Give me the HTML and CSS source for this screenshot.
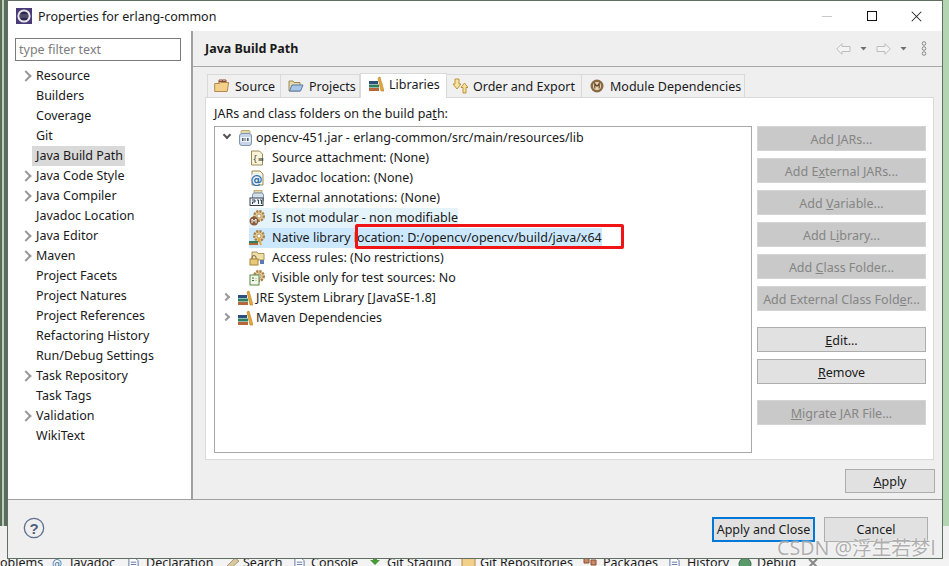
FILE: index.html
```html
<!DOCTYPE html>
<html lang="en">
<head>
<meta charset="utf-8">
<title>Properties for erlang-common</title>
<link rel="stylesheet" href="styles.css">
</head>
<body>
<svg class="defs" width="0" height="0" aria-hidden="true">
  <symbol id="books" viewBox="0 0 16 16">
    <rect x="1" y="12" width="10" height="3" fill="#b5673a"/><rect x="1" y="8.500" width="10" height="3" fill="#2f7f5f"/><rect x="1" y="5" width="9" height="3" fill="#2b4f7f"/>
    <path d="M10 2l2-1 4 14h-3z" fill="#e5a93a" stroke="#b57d22" stroke-width=".6"/>
  </symbol>
  <symbol id="gear" viewBox="0 0 16 16">
    <circle cx="10" cy="6" r="4.800" fill="#e8d09a" stroke="#a9814a" stroke-width="2.400" stroke-dasharray="2.200 1"/>
    <circle cx="10" cy="6" r="2" fill="#fff" stroke="#a9814a" stroke-width=".8"/>
  </symbol>
  <symbol id="jar" viewBox="0 0 16 16">
    <rect x="4" y="0.500" width="9" height="3" rx="1" fill="#e5d8a8" stroke="#a89a6a" stroke-width=".8"/>
    <rect x="2.500" y="3.500" width="12" height="12" rx="2.500" fill="#c7d5e8" stroke="#7f94ad"/>
    <rect x="3.500" y="7" width="10" height="5" fill="#eef2f7"/>
    <path d="M5 8h1.500v3H5zM7.600 8h.9v3h-.9zM10 8h1.600v3H10z" fill="#4a5a70"/>
  </symbol>
  <symbol id="pagei" viewBox="0 0 12 14">
    <path d="M1 .5h7l3 3v10H1z" fill="#fff" stroke="#5a6f9a"/><path d="M3 5h6M3 7.500h6M3 10h6" stroke="#5a6f9a"/>
  </symbol>
</svg>

<div class="desktop">
  <div class="dialog">
    <header class="titlebar">
      <svg class="appicon" width="16" height="16" viewBox="0 0 16 16">
        <rect width="16" height="16" fill="#4b3a78"/>
        <circle cx="8" cy="8" r="6.600" fill="#e9e7ee"/>
        <circle cx="8" cy="8" r="4.600" fill="#2b2747"/>
        <path d="M3.600 7h8.800M3.600 9h8.800" stroke="#8f88ad" stroke-width=".7"/>
      </svg>
      <span class="title">Properties for erlang-common</span>
      <div class="winctl">
        <span class="winbtn"><i class="min"></i></span>
        <span class="winbtn"><i class="max"></i></span>
        <span class="winbtn">
          <svg width="11" height="11" viewBox="0 0 12 12"><path d="M.8.8l10.400 10.400M11.200.8L.8 11.200" stroke="#222" stroke-width="1.100"/></svg>
        </span>
      </div>
    </header>

    <div class="main">
      <aside class="sidebar">
        <div class="filter">type filter text</div>
        <ul class="nav">
          <li class="exp">Resource</li>
          <li>Builders</li>
          <li>Coverage</li>
          <li>Git</li>
          <li class="current"><span>Java Build Path</span></li>
          <li class="exp">Java Code Style</li>
          <li class="exp">Java Compiler</li>
          <li>Javadoc Location</li>
          <li class="exp">Java Editor</li>
          <li class="exp">Maven</li>
          <li>Project Facets</li>
          <li>Project Natures</li>
          <li>Project References</li>
          <li>Refactoring History</li>
          <li>Run/Debug Settings</li>
          <li class="exp">Task Repository</li>
          <li>Task Tags</li>
          <li class="exp">Validation</li>
          <li>WikiText</li>
        </ul>
      </aside>

      <section class="content">
        <div class="pagehead">
          <h1>Java Build Path</h1>
          <div class="navarrows">
            <svg width="15" height="12" viewBox="0 0 15 12"><path d="M6 .7L.7 6 6 11.300V8.500h8V3.500H6z" fill="#f4f4f4" stroke="#bdbdbd"/></svg>
            <i class="drop"></i>
            <svg width="15" height="12" viewBox="0 0 15 12"><path d="M9 .7L14.300 6 9 11.300V8.500H1V3.500h8z" fill="#f4f4f4" stroke="#bdbdbd"/></svg>
            <i class="drop"></i>
            <svg class="dots" width="6" height="15" viewBox="0 0 6 15"><circle cx="3" cy="2.500" r="1.800" fill="none" stroke="#8a8a8a"/><circle cx="3" cy="7.500" r="1.800" fill="none" stroke="#8a8a8a"/><circle cx="3" cy="12.500" r="1.800" fill="none" stroke="#8a8a8a"/></svg>
          </div>
        </div>

        <div class="tabs">
          <div class="tab t1">
            <svg width="16" height="16" viewBox="0 0 16 16"><path d="M5 5V2h7v3M8.500 2v3M5 3.500h7" fill="none" stroke="#8a4a30"/><path d="M.7 5.500h5l1-1h8l-1.500 9H.7z" fill="#f3d08a" stroke="#b58a4a"/></svg>
            Source
          </div>
          <div class="tab t2">
            <svg width="16" height="16" viewBox="0 0 16 16"><path d="M1 3h4l1 1.500h6V13H1z" fill="#e8d9a8" stroke="#9a8a5a"/><path d="M1.500 13l2.500-6h11l-2.500 6z" fill="#a9c6e8" stroke="#5a7aa8"/></svg>
            Projects
          </div>
          <div class="tab t3 active">
            <svg width="16" height="16"><use href="#books"/></svg>
            Libraries
          </div>
          <div class="tab t4">
            <svg width="16" height="16" viewBox="0 0 16 16"><path d="M3 1h4v5h2L5 11 1 6h2z" fill="#f7e3a0" stroke="#b58a30" stroke-width=".9"/><path d="M11 15V9.500H9l3.500-4.500L16 9.500h-2V15z" fill="#f7e3a0" stroke="#b58a30" stroke-width=".9"/></svg>
            Order and Export
          </div>
          <div class="tab t5">
            <svg width="16" height="16" viewBox="0 0 16 16"><circle cx="8" cy="8" r="6.500" fill="#8a6a44"/><circle cx="8" cy="8" r="4" fill="#e8d8b8"/><path d="M5.800 10.500v-5l2.200 2.800 2.200-2.800v5" fill="none" stroke="#6a4a2a" stroke-width="1.200"/></svg>
            Module Dependencies
          </div>
        </div>

        <div class="tabpanel">
          <div class="panellabel">JARs and class folders on the build pa<u>t</u>h:</div>
          <div class="panelbody">
            <div class="tree">
              <div class="row"><b class="tw open"></b><svg class="ic" width="16" height="16"><use href="#jar"/></svg><span>opencv-451.jar - erlang-common/src/main/resources/lib</span></div>
              <div class="row lv2"><svg class="ic" width="16" height="16" viewBox="0 0 16 16"><path d="M2.500 1h8l3 3v11h-11z" fill="#fbf3d8" stroke="#9a8a5a"/><text class="ictext" x="3.500" y="11.500">{≡</text></svg><span>Source attachment: (None)</span></div>
              <div class="row lv2"><svg class="ic" width="16" height="16" viewBox="0 0 16 16"><path d="M3 1h8l3 3v11H3z" fill="#fbf3d8" stroke="#9a8a5a"/><circle cx="7" cy="9" r="6" fill="#e8f1fa"/><text class="icat" x="1.500" y="13.500">@</text></svg><span>Javadoc location: (None)</span></div>
              <div class="row lv2"><svg class="ic" width="16" height="16" viewBox="0 0 16 16"><rect x="5" y="0.500" width="8" height="2.500" fill="#e5d8a8" stroke="#a89a6a" stroke-width=".7"/><rect x="3.500" y="3" width="11" height="9" rx="2" fill="#d5dfec" stroke="#7f94ad"/><rect x="1" y="8" width="13" height="7.500" fill="#f2f5f8" stroke="#33414f"/><path d="M3 10h3v2H3.500v2M8 10h1.500v4M11 10h1.500v4" fill="none" stroke="#33414f"/></svg><span>External annotations: (None)</span></div>
              <div class="row lv2 hover"><svg class="ic" width="16" height="16" viewBox="0 0 16 16"><use href="#gear"/><circle cx="5" cy="11" r="4.500" fill="#8a5a3a"/><path d="M3 13.200V9l2 2.400L7 9v4.200" fill="none" stroke="#fff" stroke-width="1"/></svg><span>Is not modular - non modifiable</span></div>
              <div class="row lv2 selected"><svg class="ic" width="16" height="16" viewBox="0 0 16 16"><use href="#gear"/><rect x="0" y="13" width="9" height="2" fill="#b5673a"/><rect x="0" y="11" width="9" height="2" fill="#2f7f5f"/><path d="M9.500 8l2.500 7" stroke="#e5a93a" stroke-width="2"/></svg><span>Native library location: D:/opencv/opencv/build/java/x64</span></div>
              <div class="row lv2"><svg class="ic" width="16" height="16" viewBox="0 0 16 16"><path d="M3 2h5l1 1.500h6V10H3z" fill="#f0dfa8" stroke="#a8925a"/><rect x="1" y="9" width="8" height="6" fill="#e8c97a" stroke="#a8843a"/><path d="M3 9V7.500a2 2 0 0 1 4 0V9" fill="none" stroke="#7a6a4a"/><path d="M11 10h4v4h-4z" fill="#5a7ab5"/></svg><span>Access rules: (No restrictions)</span></div>
              <div class="row lv2"><svg class="ic" width="16" height="16" viewBox="0 0 16 16"><use href="#gear"/><rect x="1" y="5" width="9" height="10" fill="#f0f5e8" stroke="#5a8a4a"/><path d="M3 8h2M3 10.500h2M7 8v.5M7 10.500v.5" stroke="#3a6a2a"/></svg><span>Visible only for test sources: No</span></div>
              <div class="row"><b class="tw"></b><svg class="ic" width="16" height="16"><use href="#books"/></svg><span>JRE System Library [JavaSE-1.8]</span></div>
              <div class="row"><b class="tw"></b><svg class="ic" width="16" height="16"><use href="#books"/></svg><span>Maven Dependencies</span></div>
              <div class="redbox"></div>
            </div>
            <div class="actions">
              <button class="btn off">Add <u>J</u>ARs...</button>
              <button class="btn off">Add E<u>x</u>ternal JARs...</button>
              <button class="btn off">Add <u>V</u>ariable...</button>
              <button class="btn off">Add L<u>i</u>brary...</button>
              <button class="btn off">Add <u>C</u>lass Folder...</button>
              <button class="btn off">Add External Class Fold<u>e</u>r...</button>
              <button class="btn gap1"><u>E</u>dit...</button>
              <button class="btn"><u>R</u>emove</button>
              <button class="btn off gap2"><u>M</u>igrate JAR File...</button>
            </div>
          </div>
        </div>

        <div class="applyrow"><button class="btn applybtn"><u>A</u>pply</button></div>
      </section>
    </div>

    <footer class="footer">
      <svg class="help" width="22" height="22" viewBox="0 0 22 22">
        <circle cx="11" cy="11" r="9.700" fill="none" stroke="#5f6f8f" stroke-width="1.300"/>
        <text class="helpq" x="11" y="16.500">?</text>
      </svg>
      <div class="footbtns">
        <button class="btn primary">Apply and Close</button>
        <button class="btn cancel">Cancel</button>
      </div>
    </footer>
  </div>

  <div class="viewtabs">
    <span class="vt v0">oblems</span>
    <span class="vt v1"><svg width="10" height="12"><text class="vat" x="0" y="10">@</text></svg>Javadoc</span>
    <span class="vt v2"><svg width="11" height="14"><use href="#pagei"/></svg>Declaration</span>
    <span class="vt v3"><svg class="vflash" width="15" height="12" viewBox="0 0 15 12"><path d="M1 10l9-9 4 3-9 8z" fill="#d8c8a0" stroke="#a89a70"/></svg>Search</span>
    <span class="vt v4"><svg width="11" height="14"><use href="#pagei"/></svg>Console</span>
    <span class="vt v5"><svg width="14" height="14" viewBox="0 0 14 14"><path d="M5 0h4v3h3L7 8 2 3h3z" fill="#4a9a3a"/></svg>Git Staging</span>
    <span class="vt v6"><svg width="15" height="14" viewBox="0 0 15 14"><rect x="1" y="1" width="13" height="12" fill="#f3d08a" stroke="#b58a4a"/></svg>Git Repositories</span>
    <span class="vt v7"><svg width="14" height="14" viewBox="0 0 14 14"><path d="M1 1h5v5H1zM8 3h5v5H8z" fill="#c98a6a" stroke="#8a4a30"/></svg>Packages</span>
    <span class="vt v8"><svg width="11" height="14"><use href="#pagei"/></svg>History</span>
    <span class="vt v9"><svg width="14" height="14" viewBox="0 0 14 14"><circle cx="7" cy="7" r="6" fill="#5a9a6a" stroke="#3a6a4a"/></svg>Debug<svg class="vclose" width="12" height="12" viewBox="0 0 12 12"><path d="M2 2l8 8M10 2l-8 8" stroke="#888" stroke-width="2"/></svg></span>
  </div>

  <div class="watermark">CSDN @浮生若梦l</div>
</div>
</body>
</html>
```

FILE: styles.css
```css
* { box-sizing: border-box; }
html, body { margin: 0; padding: 0; }
body {
  width: 949px;
  height: 566px;
  overflow: hidden;
  font-family: "Noto Sans", "Noto Sans CJK SC", sans-serif;
  font-size: 12.5px;
  color: #1a1a1a;
}
.defs { position: absolute; }
.desktop {
  position: relative;
  width: 949px;
  height: 566px;
  background: #f0f0f0;
  overflow: hidden;
}
.desktop::before {
  content: "";
  position: absolute;
  left: 0; top: 0;
  width: 949px; height: 526px;
  background: #b4d5b2;
}
.desktop::after {
  content: "";
  position: absolute;
  left: 0; top: 0;
  width: 7px; height: 526px;
  background-image:
    linear-gradient(#5d6a5d, #5d6a5d),
    linear-gradient(#5d6a5d, #5d6a5d);
  background-size: 3px 2px, 2px 2px;
  background-position: 4px 20px, 0 28px;
  background-repeat: repeat-y;
}

.dialog {
  position: absolute;
  left: 7px; top: 0;
  width: 936px;
  height: 559px;
  z-index: 1;
  background: #fff;
  border: 1px solid #5f6f62;
  display: flex;
  flex-direction: column;
}
.titlebar {
  height: 30px;
  flex: none;
  display: flex;
  align-items: center;
  padding-left: 8px;
  background: #fff;
}
.appicon { flex: none; }
.title { margin-left: 6px; }
.winctl { margin-left: auto; display: flex; align-items: center; height: 30px; margin-right: 3px; }
.winbtn { width: 45px; height: 30px; display: flex; align-items: center; justify-content: center; }
.min { width: 10px; height: 1px; background: #c8c8c8; display: block; }
.max { width: 10px; height: 10px; border: 1px solid #111; display: block; }

.main { flex: 1; display: flex; min-height: 0; border-bottom: 1px solid #a0a0a0; }
.sidebar { width: 185px; flex: none; background: #fff; border-right: 2px solid #a0a0a0; padding: 7px 0 0 7px; }
.filter {
  width: 166px; height: 23px;
  border: 1px solid #7a7a7a;
  padding: 0 3px;
  line-height: 21px;
  color: #7d7d7d;
  background: #fff;
}
.nav { list-style: none; margin: 5px 0 0; padding: 0; }
.nav li { height: 20px; line-height: 20px; padding-left: 21px; position: relative; white-space: nowrap; }
.nav li.exp::before {
  content: "";
  position: absolute;
  left: 7px; top: 6px;
  width: 6px; height: 6px;
  border: solid #9a9a9a;
  border-width: 2px 2px 0 0;
  transform: rotate(45deg);
}
.nav li.current { padding-left: 17px; }
.nav li.current span { display: inline-block; background: #d9d9d9; padding: 0 2px 0 4px; height: 20px; }

.content { flex: 1; background: #efefef; display: flex; flex-direction: column; min-width: 0; }
.pagehead {
  height: 36px; flex: none;
  display: flex; align-items: center;
  padding-left: 12px;
  border-bottom: 1px solid #a8a8a8;
}
h1 { margin: 0; font-size: 12.5px; font-weight: 700; }
.navarrows { margin-left: auto; margin-right: 15px; display: flex; align-items: center; gap: 9px; }
.drop { width: 7px; height: 4px; background: #6f6f6f; clip-path: polygon(0 0, 100% 0, 50% 100%); display: block; }
.dots { margin-left: 5px; }

.tabs { display: flex; align-items: flex-end; height: 30px; padding: 7px 0 0 14px; flex: none; position: relative; }
.tab {
  height: 23px;
  display: flex; align-items: center; gap: 5px;
  padding-left: 7px;
  background: #f0f0f0;
  border: 1px solid #d9d9d9;
  border-bottom: 0;
  border-left: 0;
  white-space: nowrap;
}
.t1 { width: 74px; border-left: 1px solid #d9d9d9; padding-left: 6px; }
.t2 { width: 79px; }
.t3 { width: 87px; }
.t4 { width: 135px; padding-left: 5px; }
.t5 { width: 163px; }
.tab.active { height: 25px; background: #fff; border-left: 1px solid #d9d9d9; position: relative; top: 1px; padding-bottom: 4px; z-index: 1; }

.tabpanel {
  margin-left: 12px;
  width: 729px;
  height: 363px;
  flex: none;
  background: #fff;
  border: 1px solid #d9d9d9;
  padding: 8px 8px 0 8px;
  display: flex;
  flex-direction: column;
}
.panellabel { height: 20px; line-height: 16px; white-space: nowrap; }
.panelbody { display: flex; gap: 5px; }
.tree {
  position: relative;
  width: 538px;
  height: 327px;
  border: 1px solid #a8a8a8;
  padding-top: 1px;
  background: #fff;
  flex: none;
}
.row { height: 20px; display: flex; align-items: center; padding-left: 22px; position: relative; white-space: nowrap; }
.row .ic { flex: none; margin-right: 3px; }
.row span { line-height: 20px; }
.tw { position: absolute; left: 8px; top: 6px; width: 6px; height: 6px; border: solid #9a9a9a; border-width: 2px 2px 0 0; transform: rotate(45deg); }
.tw.open { border-color: #555; transform: rotate(135deg); left: 9px; top: 4px; }
.lv2 { padding-left: 0; margin-left: 34px; width: max-content; }
.lv2 .ic { margin-right: 7px; }
.hover { background: #e5f3fb; }
.selected { background: #cce8ff; }
.ictext { font-family: "DejaVu Sans", sans-serif; font-size: 8px; fill: #333; }
.icat { font-family: "DejaVu Sans", sans-serif; font-size: 12px; font-weight: 700; fill: #2f6fa8; }

.redbox {
  position: absolute;
  left: 140px; top: 97px;
  width: 269px; height: 25px;
  border: 3px solid #f01414;
  border-radius: 2px;
}

.actions { display: flex; flex-direction: column; gap: 7px; flex: none; }
.btn {
  width: 169px; height: 25px;
  font: inherit;
  color: #1a1a1a;
  background: #e1e1e1;
  border: 1px solid #adadad;
  padding: 0;
  white-space: nowrap;
  text-align: center;
}
.actions .btn { padding-top: 2px; }
.btn.off { background: #c9c9c9; border-color: #d4d4d4; color: #858585; }
.gap1 { margin-top: 9px; }
.gap2 { margin-top: 9px; }

.applyrow { display: flex; justify-content: flex-end; padding: 9px 7px 0 0; }
.applybtn { width: 90px; height: 24px; }

.footer { height: 58px; flex: none; background: #efefef; display: flex; align-items: center; padding: 0 14px 0 15px; }
.help { flex: none; margin-bottom: 2px; }
.helpq { font-family: "Liberation Sans", sans-serif; font-weight: 700; font-size: 15px; fill: #4f5f7f; text-anchor: middle; }
.footbtns { margin-left: auto; display: flex; gap: 9px; }
.primary { width: 103px; height: 25px; border: 2px solid #0078d7; }
.cancel { width: 104px; height: 25px; }

.viewtabs {
  position: absolute;
  left: 0; top: 558px;
  width: 949px; height: 8px;
  background: #f3f3f3;
  display: flex;
  overflow: hidden;
  white-space: nowrap;
  z-index: 0;
}
.vt { display: flex; align-items: flex-start; line-height: 15px; margin-top: -3px; flex: none; }
.vt svg { flex: none; margin-top: 2px; }
.vat { font-family: "DejaVu Sans", sans-serif; font-size: 10px; fill: #2f6fa8; }
.v0 { width: 52px; }
.v1 { width: 76px; gap: 8px; }
.v2 { width: 97px; gap: 7px; }
.v3 { width: 69px; gap: 3px; }
.v4 { width: 74px; gap: 6px; }
.v5 { width: 93px; gap: 5px; }
.v6 { width: 122px; gap: 4px; }
.v7 { width: 86px; gap: 6px; }
.v8 { width: 69px; gap: 7px; }
.v9 { gap: 5px; }
.vclose { margin-left: 6px; }

.watermark {
  position: absolute;
  left: 777px; top: 534px;
  z-index: 2;
  font-size: 19.6px;
  line-height: 28px;
  color: rgba(150, 150, 150, .75);
  text-shadow: 0 0 2px #fff;
  white-space: nowrap;
}
```
